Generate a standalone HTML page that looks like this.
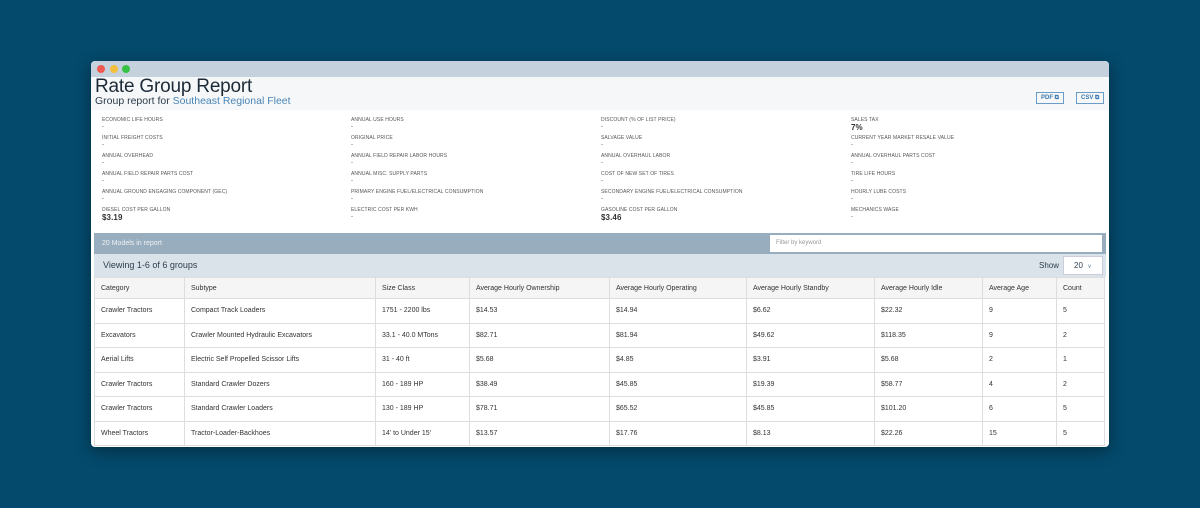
<!DOCTYPE html>
<html><head><meta charset="utf-8"><style>
*{box-sizing:border-box;margin:0;padding:0}
body{width:1200px;height:508px;background:#044a6c;font-family:"Liberation Sans",sans-serif;position:relative;overflow:hidden}
.win{position:absolute;left:91px;top:61px;width:1018px;height:386px;background:#fff;border-radius:4px;overflow:hidden;box-shadow:0 4px 16px rgba(0,0,0,.4)}
.tb{height:16px;background:#c5d1dc;position:relative}
.dot{position:absolute;top:4px;width:8px;height:8px;border-radius:50%}
.hd{height:33px;background:#f6f7f8;position:relative}
h1{position:absolute;left:4px;top:0;font-size:19px;font-weight:normal;color:#1d2b38;letter-spacing:-.2px;line-height:20px}
.sub{position:absolute;left:4px;top:18px;font-size:10.5px;color:#2a3b4a}
.sub span{color:#4a86b8}
.btn{position:absolute;top:15px;height:12px;border:1px solid #6a9cc7;font-size:6px;line-height:10px;color:#3c78ad;padding:0 4px;font-weight:bold}
.info{position:absolute;top:52px;left:0;width:1018px}
.it{position:absolute;font-size:5px;color:#555;letter-spacing:.1px}
.it b{display:block;font-weight:normal;font-size:6px;color:#555;margin-top:1px}
.it b.v{font-size:8px;color:#333;font-weight:bold;margin-top:0}
.bar{position:absolute;left:3px;top:172px;width:1012px;height:21px;background:#98adbd;font-size:7px;color:#eef2f5;padding:7px 8px}
.flt{position:absolute;left:676px;top:2px;width:332px;height:17px;background:#fff;font-size:6px;color:#999;padding:5px 6px}
.vw{position:absolute;left:3px;top:193px;width:1012px;height:23px;background:#dbe3ea;font-size:9px;color:#2c3d4c;padding:6px 9px}
.show{position:absolute;left:945px;top:7px;font-size:8px}
.sel{position:absolute;left:969px;top:2px;width:40px;height:19px;background:#fff;border:1px solid #ccd;font-size:8px;padding:4px 0 0 10px;white-space:nowrap}
table{position:absolute;left:3px;top:216px;width:1011px;border-collapse:collapse;font-size:7px;color:#333}
td{border:1px solid #ddd;padding:0 6px;height:24.5px}
tr:first-child td{background:#f5f5f5;height:21px;color:#333}
</style></head><body>
<div class="win">
<div class="tb"><div class="dot" style="left:6px;background:#ee5a52"></div><div class="dot" style="left:19px;background:#f4be3e"></div><div class="dot" style="left:31px;background:#36c247"></div></div>
<div class="hd"><h1>Rate Group Report</h1><div class="sub">Group report for <span>Southeast Regional Fleet</span></div>
<div class="btn" style="left:945px">PDF ⧉</div><div class="btn" style="left:985px">CSV ⧉</div></div>
<div class="info">
<div class="it" style="left:11px;top:4px">ECONOMIC LIFE HOURS<b>-</b></div>
<div class="it" style="left:11px;top:22px">INITIAL FREIGHT COSTS<b>-</b></div>
<div class="it" style="left:11px;top:40px">ANNUAL OVERHEAD<b>-</b></div>
<div class="it" style="left:11px;top:58px">ANNUAL FIELD REPAIR PARTS COST<b>-</b></div>
<div class="it" style="left:11px;top:76px">ANNUAL GROUND ENGAGING COMPONENT (GEC)<b>-</b></div>
<div class="it" style="left:11px;top:94px">DIESEL COST PER GALLON<b class="v">$3.19</b></div>
<div class="it" style="left:260px;top:4px">ANNUAL USE HOURS<b>-</b></div>
<div class="it" style="left:260px;top:22px">ORIGINAL PRICE<b>-</b></div>
<div class="it" style="left:260px;top:40px">ANNUAL FIELD REPAIR LABOR HOURS<b>-</b></div>
<div class="it" style="left:260px;top:58px">ANNUAL MISC. SUPPLY PARTS<b>-</b></div>
<div class="it" style="left:260px;top:76px">PRIMARY ENGINE FUEL/ELECTRICAL CONSUMPTION<b>-</b></div>
<div class="it" style="left:260px;top:94px">ELECTRIC COST PER KWH<b>-</b></div>
<div class="it" style="left:510px;top:4px">DISCOUNT (% OF LIST PRICE)<b>-</b></div>
<div class="it" style="left:510px;top:22px">SALVAGE VALUE<b>-</b></div>
<div class="it" style="left:510px;top:40px">ANNUAL OVERHAUL LABOR<b>-</b></div>
<div class="it" style="left:510px;top:58px">COST OF NEW SET OF TIRES<b>-</b></div>
<div class="it" style="left:510px;top:76px">SECONDARY ENGINE FUEL/ELECTRICAL CONSUMPTION<b>-</b></div>
<div class="it" style="left:510px;top:94px">GASOLINE COST PER GALLON<b class="v">$3.46</b></div>
<div class="it" style="left:760px;top:4px">SALES TAX<b class="v">7%</b></div>
<div class="it" style="left:760px;top:22px">CURRENT YEAR MARKET RESALE VALUE<b>-</b></div>
<div class="it" style="left:760px;top:40px">ANNUAL OVERHAUL PARTS COST<b>-</b></div>
<div class="it" style="left:760px;top:58px">TIRE LIFE HOURS<b>-</b></div>
<div class="it" style="left:760px;top:76px">HOURLY LUBE COSTS<b>-</b></div>
<div class="it" style="left:760px;top:94px">MECHANICS WAGE<b>-</b></div>
</div>
<div class="bar">20 Models in report<div class="flt">Filter by keyword</div></div>
<div class="vw">Viewing 1-6 of 6 groups<span class="show">Show</span><div class="sel">20 &nbsp;<span style="font-size:6px;color:#6a8aa5">∨</span></div></div>
<table>
<tr><td style="width:90px">Category</td><td style="width:191px">Subtype</td><td style="width:94px">Size Class</td><td style="width:140px">Average Hourly Ownership</td><td style="width:137px">Average Hourly Operating</td><td style="width:128px">Average Hourly Standby</td><td style="width:108px">Average Hourly Idle</td><td style="width:74px">Average Age</td><td>Count</td></tr>
<tr><td>Crawler Tractors</td><td>Compact Track Loaders</td><td>1751 - 2200 lbs</td><td>$14.53</td><td>$14.94</td><td>$6.62</td><td>$22.32</td><td>9</td><td>5</td></tr>
<tr><td>Excavators</td><td>Crawler Mounted Hydraulic Excavators</td><td>33.1 - 40.0 MTons</td><td>$82.71</td><td>$81.94</td><td>$49.62</td><td>$118.35</td><td>9</td><td>2</td></tr>
<tr><td>Aerial Lifts</td><td>Electric Self Propelled Scissor Lifts</td><td>31 - 40 ft</td><td>$5.68</td><td>$4.85</td><td>$3.91</td><td>$5.68</td><td>2</td><td>1</td></tr>
<tr><td>Crawler Tractors</td><td>Standard Crawler Dozers</td><td>160 - 189 HP</td><td>$38.49</td><td>$45.85</td><td>$19.39</td><td>$58.77</td><td>4</td><td>2</td></tr>
<tr><td>Crawler Tractors</td><td>Standard Crawler Loaders</td><td>130 - 189 HP</td><td>$78.71</td><td>$65.52</td><td>$45.85</td><td>$101.20</td><td>6</td><td>5</td></tr>
<tr><td>Wheel Tractors</td><td>Tractor-Loader-Backhoes</td><td>14' to Under 15'</td><td>$13.57</td><td>$17.76</td><td>$8.13</td><td>$22.26</td><td>15</td><td>5</td></tr>
</table>
</div>
</body></html>
